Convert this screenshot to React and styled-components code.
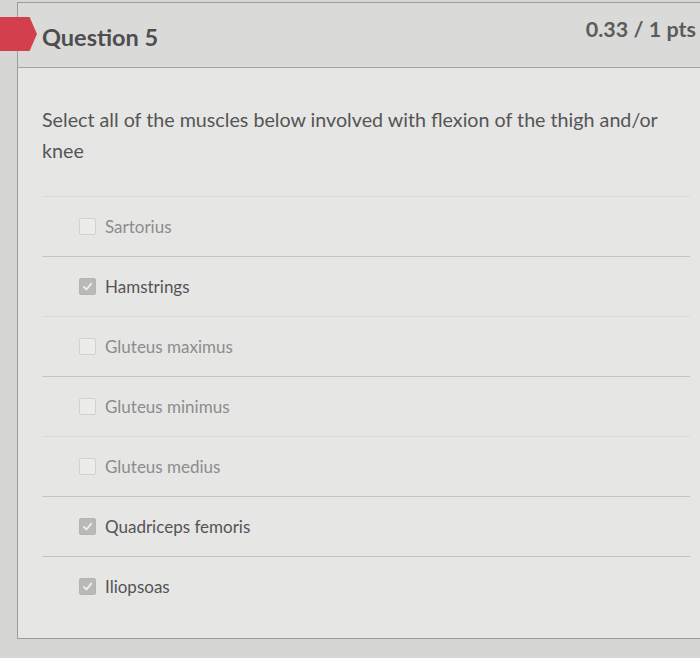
import React from 'react';
import styled, { createGlobalStyle } from 'styled-components';

const GlobalStyle = createGlobalStyle`
  html, body {
    margin: 0;
    padding: 0;
    overflow: hidden;
    background: #d6d6d4;
    font-family: Lato, "Open Sans", sans-serif;
  }
`;

const Page = styled.div`
  width: 700px;
  height: 658px;
  padding-top: 2px;
  padding-left: 17px;
  box-sizing: border-box;
  overflow: hidden;
`;

const Card = styled.div`
  width: 700px;
  border: 1px solid #9c9c9a;
  background: #e6e6e4;
`;

const Header = styled.div`
  position: relative;
  height: 64px;
  display: flex;
  justify-content: space-between;
  background: #dadad8;
  border-bottom: 1px solid #a4a4a2;
`;

const Flag = styled.div`
  position: absolute;
  left: -18px;
  top: 14px;
  width: 37px;
  height: 34px;
  background: #d33f4c;
  clip-path: polygon(0 0, 80% 0, 100% 50%, 80% 100%, 0 100%);
`;

const Title = styled.h2`
  margin: 0;
  padding: 20px 0 0 24px;
  font-size: 23.5px;
  font-weight: 700;
  color: #4e4e50;
`;

const Points = styled.div`
  padding: 13px 5px 0 0;
  margin-right: 17px;
  font-size: 21.5px;
  font-weight: 700;
  color: #5c5c5c;
`;

const Body = styled.div`
  padding: 36px 0 22px 24px;
`;

const Prompt = styled.p`
  margin: 0 0 30px;
  font-size: 19.7px;
  line-height: 31px;
  color: #555557;
  width: 630px;
`;

const Answers = styled.div`
  width: 648px;
`;

const Answer = styled.div`
  display: flex;
  align-items: center;
  gap: 9px;
  height: 60px;
  padding-left: 37px;
  border-top: 1px solid ${({ faint }) => (faint ? '#dbdbd9' : '#c4c4c2')};
  box-sizing: border-box;
`;

const Box = styled.span`
  width: 15px;
  height: 15px;
  border-radius: 2px;
  display: flex;
  align-items: center;
  justify-content: center;
  background: ${({ checked }) => (checked ? '#b9b9b7' : '#ececea')};
  border: 1px solid ${({ checked }) => (checked ? '#b4b4b2' : '#d2d2d0')};
`;

const Label = styled.span`
  font-size: 17px;
  color: ${({ checked }) => (checked ? '#545456' : '#8c8c8e')};
`;

const Check = () => (
  <svg width="11" height="11" viewBox="0 0 12 12">
    <path d="M2 6.5 L5 9.2 L10 2.8" fill="none" stroke="#eeeeec" strokeWidth="2" strokeLinecap="round" strokeLinejoin="round" />
  </svg>
);

const answers = [
  { text: 'Sartorius', checked: false, faint: true },
  { text: 'Hamstrings', checked: true },
  { text: 'Gluteus maximus', checked: false, faint: true },
  { text: 'Gluteus minimus', checked: false },
  { text: 'Gluteus medius', checked: false, faint: true },
  { text: 'Quadriceps femoris', checked: true },
  { text: 'Iliopsoas', checked: true },
];

export default function App() {
  return (
    <Page>
      <GlobalStyle />
      <Card>
        <Header>
          <Flag />
          <Title>Question 5</Title>
          <Points>0.33 / 1 pts</Points>
        </Header>
        <Body>
          <Prompt>Select all of the muscles below involved with flexion of the thigh and/or knee</Prompt>
          <Answers>
            {answers.map((a) => (
              <Answer key={a.text} faint={a.faint}>
                <Box checked={a.checked}>{a.checked && <Check />}</Box>
                <Label checked={a.checked}>{a.text}</Label>
              </Answer>
            ))}
          </Answers>
        </Body>
      </Card>
    </Page>
  );
}
